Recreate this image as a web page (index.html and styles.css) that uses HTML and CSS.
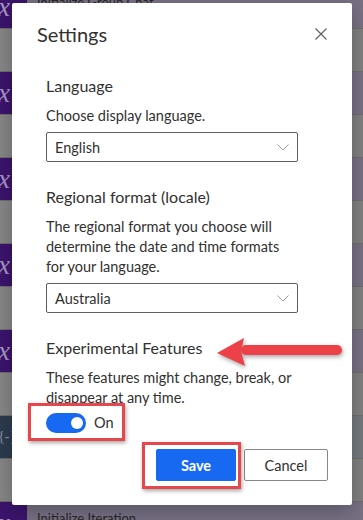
FILE: index.html
```html
<!DOCTYPE html>
<html lang="en">
<head>
    <meta charset="UTF-8">
    <meta name="viewport" content="width=device-width, initial-scale=1.0">
    <title>Settings</title>
    <link rel="stylesheet" href="styles.css">
</head>
<body>
    <div class="screen">
        <!-- flow designer behind the modal -->
        <ul class="flow">
            <li class="step"><span class="step-icon">x</span><span class="step-name">Initialize Group Chat</span></li>
            <li class="link"></li>
            <li class="step"><span class="step-icon">x</span><span class="step-name">Initialize Member</span></li>
            <li class="link"></li>
            <li class="step"><span class="step-icon">x</span><span class="step-name">Initialize Owner</span></li>
            <li class="link"></li>
            <li class="step"><span class="step-icon">x</span><span class="step-name">Initialize Topic</span></li>
            <li class="link"></li>
            <li class="step"><span class="step-icon">x</span><span class="step-name">Initialize Message</span></li>
            <li class="link"></li>
            <li class="step step-data"><span class="step-icon">{-}</span><span class="step-name">Compose</span></li>
            <li class="link"></li>
            <li class="step"><span class="step-icon">x</span><span class="step-name">Initialize Iteration</span></li>
        </ul>

        <div class="dialog">
            <div class="dialog-head">
                <h1>Settings</h1>
                <button class="close" aria-label="Close">
                    <svg width="12" height="12" viewBox="0 0 12 12"><path d="M0.5 0.5 L11.5 11.5 M11.5 0.5 L0.5 11.5" stroke="#605e5c" stroke-width="1.1" fill="none"/></svg>
                </button>
            </div>
            <div class="dialog-body">
                <section class="group">
                    <h2>Language</h2>
                    <p>Choose display language.</p>
                    <div class="select"><span>English</span>
                        <svg width="12" height="7" viewBox="0 0 12 7"><path d="M0.5 0.5 L6 6 L11.5 0.5" stroke="#a19f9d" stroke-width="1" fill="none"/></svg>
                    </div>
                </section>
                <section class="group">
                    <h2>Regional format (locale)</h2>
                    <p>The regional format you choose will determine the date and time formats for your language.</p>
                    <div class="select"><span>Australia</span>
                        <svg width="12" height="7" viewBox="0 0 12 7"><path d="M0.5 0.5 L6 6 L11.5 0.5" stroke="#a19f9d" stroke-width="1" fill="none"/></svg>
                    </div>
                </section>
                <section class="group">
                    <h2>Experimental Features</h2>
                    <p>These features might change, break, or disappear at any time.</p>
                    <div class="toggle-row">
                        <span class="toggle"><span class="knob"></span></span>
                        <span>On</span>
                    </div>
                </section>
            </div>
            <div class="dialog-foot">
                <button class="btn btn-primary">Save</button>
                <button class="btn">Cancel</button>
            </div>
        </div>

        <!-- red annotations -->
        <div class="mark mark-toggle"></div>
        <div class="mark mark-save"></div>
        <svg class="arrow" width="140" height="45" viewBox="0 0 140 45">
            <line x1="36" y1="20" x2="127" y2="20" stroke="#ec4148" stroke-width="10" stroke-linecap="round"/>
            <polygon points="7,23 34,8 31,21 35,36" fill="#ec4148"/>
        </svg>
    </div>
</body>
</html>
```

FILE: styles.css
```css
body {
    margin: 0;
    font-family: "Segoe UI", Lato, sans-serif;
    color: #323130;
}
.screen {
    position: relative;
    width: 363px;
    height: 520px;
    overflow: hidden;
    background: #7f7f7f;
}

/* background flow */
.flow {
    list-style: none;
    margin: -14px 0 0;
    padding: 0;
}
.flow li {
    height: 43px;
    box-sizing: border-box;
    border-bottom: 1px solid #6d6d6d;
    display: flex;
}
.link {
    background: #808080;
}
.link::before {
    content: "";
    width: 27px;
    background: #868686;
}
.step {
    background: #787084;
}
.step-icon {
    width: 27px;
    background: #3b146c;
    color: #a996c6;
    font-family: "Liberation Serif", serif;
    font-style: italic;
    font-size: 27px;
    text-indent: -2px;
    line-height: 42px;
    overflow: hidden;
}
.step-name {
    padding: 8px 0 0 10px;
    font-size: 13px;
    color: #262626;
}
.step-data {
    background: #747980;
}
.step-data .step-icon {
    background: #2c3b4e;
    color: #8a97a8;
    font-style: normal;
    font-size: 14px;
}

/* dialog */
.dialog {
    position: absolute;
    left: 12px;
    top: 3px;
    width: 340px;
    height: 502px;
    box-sizing: border-box;
    background: #fff;
    border-radius: 2px;
    box-shadow: 0 6px 20px rgba(0, 0, 0, 0.25);
    display: flex;
    flex-direction: column;
}
.dialog-head {
    display: flex;
    align-items: center;
    justify-content: space-between;
    padding: 17px 19px 0 25px;
}
.dialog-head h1 {
    margin: 0;
    font-size: 20px;
    font-weight: 400;
    line-height: 28px;
}
.close {
    width: 24px;
    height: 24px;
    border: none;
    background: none;
    padding: 0;
    display: flex;
    align-items: center;
    justify-content: center;
}
.dialog-body {
    padding: 3px 0 0 34px;
}
.group {
    margin-top: 24px;
}
.group h2 {
    margin: 0;
    font-size: 16px;
    font-weight: 400;
    line-height: 22px;
}
.group p {
    margin: 9px 0 0;
    font-size: 14.5px;
    line-height: 20px;
    width: 250px;
}
.select {
    margin-top: 6px;
    width: 252px;
    height: 30px;
    box-sizing: border-box;
    border: 1px solid #605e5c;
    border-radius: 2px;
    display: flex;
    align-items: center;
    justify-content: space-between;
    padding: 0 8px;
    font-size: 14.5px;
}
.toggle-row {
    margin-top: 5px;
    display: flex;
    align-items: center;
    gap: 8px;
    font-size: 14.5px;
    line-height: 20px;
}
.toggle {
    width: 40px;
    height: 20px;
    border-radius: 10px;
    background: #1769f2;
    display: flex;
    align-items: center;
    justify-content: flex-end;
    padding-right: 3px;
    box-sizing: border-box;
}
.knob {
    width: 12px;
    height: 12px;
    border-radius: 50%;
    background: #fff;
}
.dialog-foot {
    margin-top: auto;
    display: flex;
    justify-content: flex-end;
    gap: 8px;
    padding: 0 24px 24px 0;
}
.btn {
    height: 32px;
    min-width: 84px;
    border: 1px solid #8a8886;
    border-radius: 2px;
    background: #fff;
    color: #323130;
    font-family: inherit;
    font-size: 14.5px;
}
.btn-primary {
    min-width: 80px;
    border-color: #1769f2;
    background: #1769f2;
    color: #fff;
    font-weight: 700;
}

/* annotations */
.mark {
    position: absolute;
    border: 3px solid #e5474c;
    box-shadow: 1px 2px 4px rgba(0, 0, 0, 0.35);
}
.mark-toggle {
    left: 28px;
    top: 403px;
    width: 91px;
    height: 32px;
}
.mark-save {
    left: 142px;
    top: 442px;
    width: 93px;
    height: 41px;
}
.arrow {
    position: absolute;
    left: 210px;
    top: 330px;
    filter: drop-shadow(1px 2px 2px rgba(0, 0, 0, 0.35));
}
```
